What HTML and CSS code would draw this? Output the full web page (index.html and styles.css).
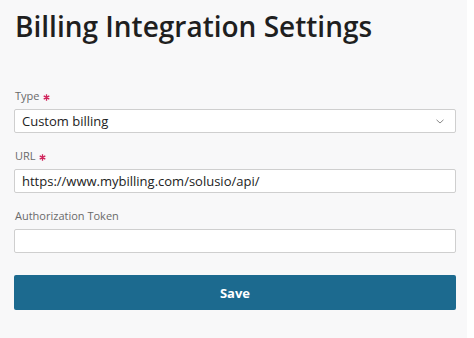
FILE: index.html
```html
<!DOCTYPE html>
<html>
<head>
<meta charset="utf-8">
<link rel="stylesheet" href="styles.css">
</head>
<body>
<div class="panel">
  <h1 class="title">Billing Integration Settings</h1>
  <form class="form">
    <div class="field">
      <div class="label">Type <svg class="req" width="7" height="7" viewBox="0 0 7 7"><path d="M3.5 0.3 V6.7 M0.7 1.9 L6.3 5.1 M0.7 5.1 L6.3 1.9" stroke="#d0245b" stroke-width="1.3" fill="none"/></svg></div>
      <div class="select">
        <span class="value">Custom billing</span>
        <svg class="chev" width="8" height="5" viewBox="0 0 8 5"><path d="M0.5 0.8 L4 4 L7.5 0.8" fill="none" stroke="#8a8a8a" stroke-width="1"/></svg>
      </div>
    </div>
    <div class="field">
      <div class="label">URL <svg class="req" width="7" height="7" viewBox="0 0 7 7"><path d="M3.5 0.3 V6.7 M0.7 1.9 L6.3 5.1 M0.7 5.1 L6.3 1.9" stroke="#d0245b" stroke-width="1.3" fill="none"/></svg></div>
      <div class="input"><span class="value">https://www.mybilling.com/solusio/api/</span></div>
    </div>
    <div class="field">
      <div class="label">Authorization Token</div>
      <div class="input"></div>
    </div>
    <button class="save" type="button">Save</button>
  </form>
</div>
</body>
</html>
```
FILE: styles.css
```css
html, body {
  margin: 0;
  padding: 0;
  background: #ffffff;
}
body {
  font-family: "Open Sans", "Noto Sans", sans-serif;
  width: 474px;
  height: 338px;
  overflow: hidden;
}
.panel {
  width: 453px;
  height: 335px;
  background: #f8f8f9;
  padding: 9px 0 0 14px;
  box-sizing: content-box;
}
.title {
  margin: 0 0 44px 1px;
  font-size: 28px;
  line-height: 34px;
  font-weight: 600;
  color: #1f1f1f;
  letter-spacing: 0;
}
.form {
  display: flex;
  flex-direction: column;
  width: 442px;
}
.field {
  display: flex;
  flex-direction: column;
  margin-bottom: 14px;
}
.label {
  display: block;
  height: 17px;
  font-size: 11px;
  line-height: 17px;
  color: #6a6a6a;
  margin: 0 0 5px 1px;
}
.req {
  vertical-align: -1px;
  margin-left: 1px;
}
.select, .input {
  height: 24px;
  box-sizing: border-box;
  border: 1px solid #cfcfcf;
  border-radius: 2px;
  background: #fff;
  display: flex;
  align-items: center;
  padding: 0 10px 0 7px;
  font-size: 13px;
  color: #222;
}
.select {
  justify-content: space-between;
}
.chev {
  margin-right: 1px;
}
.save {
  margin-top: 8px;
  height: 35px;
  border: none;
  border-radius: 2px;
  background: #1c6a8f;
  color: #fff;
  font-family: "Open Sans", "Noto Sans", sans-serif;
  font-weight: 700;
  font-size: 13px;
  cursor: pointer;
}
```
